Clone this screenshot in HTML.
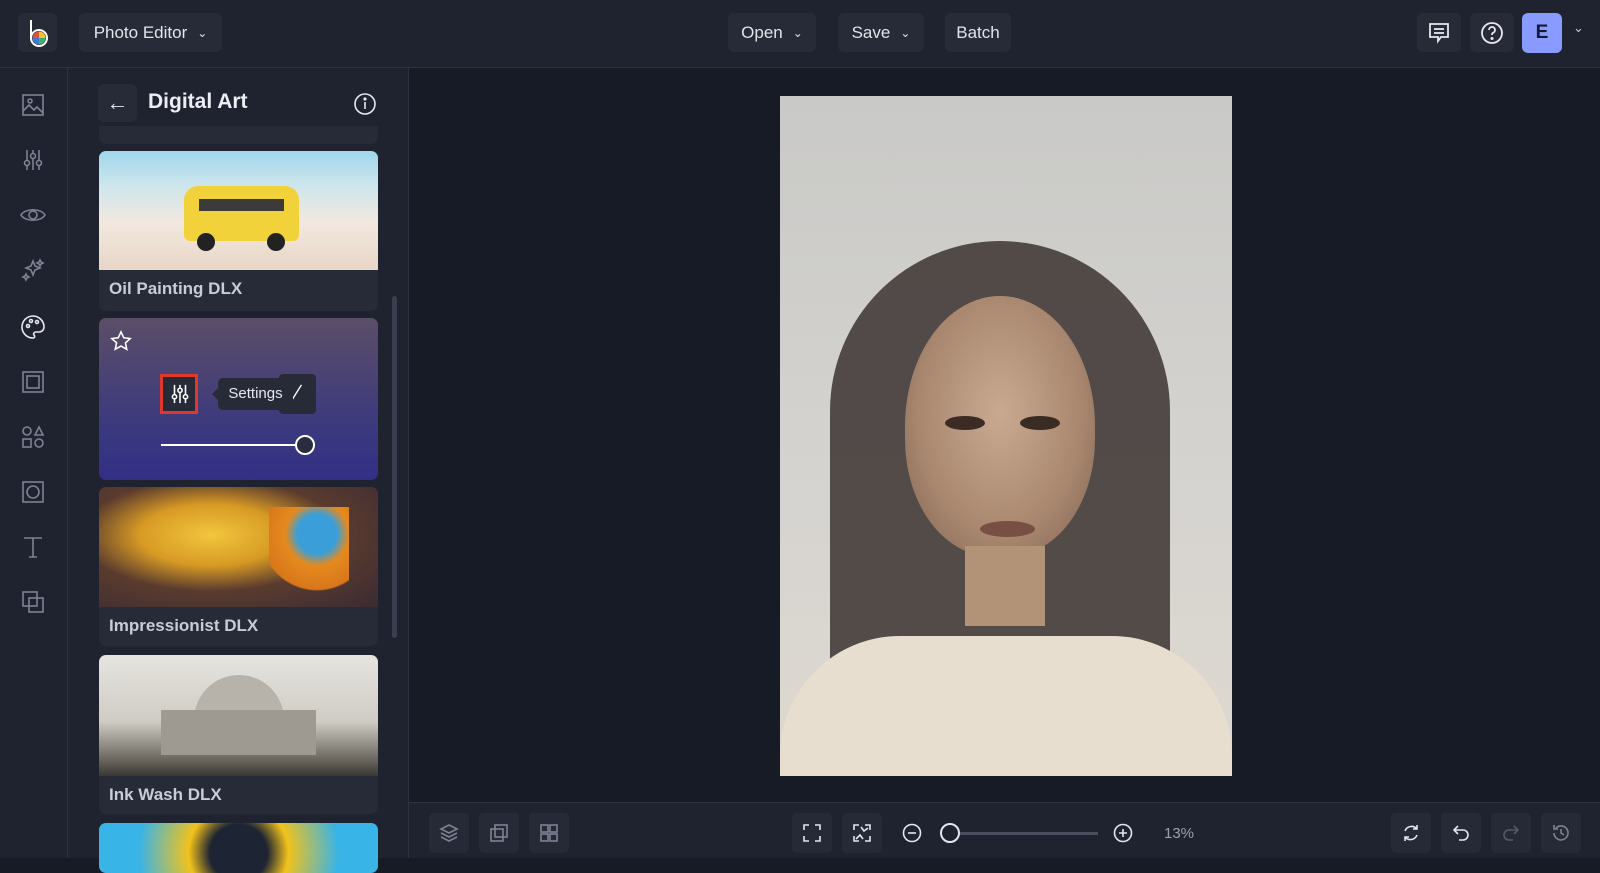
<!DOCTYPE html>
<html><head><meta charset="utf-8"><style>
*{box-sizing:border-box;margin:0;padding:0}
body{width:1600px;height:858px;overflow:hidden;background:#171b26;font-family:"Liberation Sans",sans-serif;color:#e4e6ee;position:relative}
.abs{position:absolute}
.top{left:0;top:0;width:1600px;height:68px;background:#1f2330;border-bottom:1px solid #2c3140}
.btn{position:absolute;background:#272b38;border-radius:6px;color:#e2e4ea;font-size:17px;display:flex;align-items:center;justify-content:center;gap:10px}
.rail{left:0;top:68px;width:68px;height:790px;background:#1f2330;border-right:1px solid #2c3140}
.panel{left:68px;top:68px;width:341px;height:790px;background:#1f2330;border-right:1px solid #2c3140}
.card{position:absolute;left:99px;width:279px;background:#272b38;border-radius:7px;overflow:hidden}
.lbl{position:absolute;left:10px;font-size:17px;font-weight:bold;color:#c9ccd6}
.ic{position:absolute;stroke:#7d8294;fill:none;stroke-width:1.6}
.bb{left:409px;top:802px;width:1191px;height:56px;background:#1f2330;border-top:1px solid #2c3140}
.sq{position:absolute;top:813px;width:40px;height:40px;background:#262a37;border-radius:5px}
</style></head><body>
<div class="abs top"></div>
<div class="btn" style="left:18px;top:13px;width:39px;height:39px"><svg width="26" height="30" viewBox="0 0 26 30"><line x1="6" y1="2" x2="6" y2="20" stroke="#fff" stroke-width="2"/><circle cx="14" cy="20" r="8" fill="none" stroke="#fff" stroke-width="2"/><circle cx="14" cy="20" r="6.5" fill="#e0513a"/><path d="M14 20 L14 13.5 A6.5 6.5 0 0 1 20.5 20Z" fill="#f4c430"/><path d="M14 20 L20.5 20 A6.5 6.5 0 0 1 14 26.5Z" fill="#3fb26a"/><path d="M14 20 L14 26.5 A6.5 6.5 0 0 1 7.5 20Z" fill="#3a7bd5"/></svg></div>
<div class="btn" style="left:79px;top:13px;width:143px;height:39px">Photo Editor <span style="font-size:12px">&#8964;</span></div>
<div class="btn" style="left:728px;top:13px;width:88px;height:39px">Open <span style="font-size:12px">&#8964;</span></div>
<div class="btn" style="left:838px;top:13px;width:86px;height:39px">Save <span style="font-size:12px">&#8964;</span></div>
<div class="btn" style="left:945px;top:13px;width:66px;height:39px">Batch</div>
<div class="btn" style="left:1417px;top:13px;width:44px;height:39px"><svg width="24" height="24" viewBox="0 0 24 24" fill="none" stroke="#e8e8ee" stroke-width="1.8"><path d="M3 3h18v13h-7l-3 4v-4H3z"/><line x1="7" y1="8" x2="17" y2="8"/><line x1="7" y1="12" x2="17" y2="12"/></svg></div>
<div class="btn" style="left:1470px;top:13px;width:44px;height:39px"><svg width="26" height="26" viewBox="0 0 26 26" fill="none" stroke="#e8e8ee" stroke-width="1.8"><circle cx="13" cy="13" r="10"/><path d="M10 10a3 3 0 1 1 4 2.8c-1 .4-1 1.2-1 2.2"/><circle cx="13" cy="18.5" r=".6" fill="#e8e8ee"/></svg></div>
<div class="btn" style="left:1522px;top:13px;width:40px;height:40px;background:#8a9bff;color:#141830;font-weight:bold;font-size:19px">E</div>
<div class="abs" style="left:1573px;top:20px;font-size:13px;color:#ccc">&#8964;</div>

<div class="abs rail"></div>
<svg class="ic" style="left:21px;top:93px" width="24" height="24" viewBox="0 0 24 24"><rect x="2" y="2" width="20" height="20"/><circle cx="9" cy="8" r="2"/><path d="M2 18l6-6 5 5 3-3 6 6"/></svg>
<svg class="ic" style="left:21px;top:148px" width="24" height="24" viewBox="0 0 24 24"><path d="M6 2v20M12 2v20M18 2v20"/><circle cx="6" cy="15" r="2.5" fill="#1f2330"/><circle cx="12" cy="8" r="2.5" fill="#1f2330"/><circle cx="18" cy="15" r="2.5" fill="#1f2330"/></svg>
<svg class="ic" style="left:20px;top:203px" width="26" height="24" viewBox="0 0 26 24"><path d="M1 12c4-7 20-7 24 0-4 7-20 7-24 0z"/><circle cx="13" cy="12" r="4"/></svg>
<svg class="ic" style="left:21px;top:258px" width="24" height="24" viewBox="0 0 24 24"><path d="M12 3l2 5 5 2-5 2-2 5-2-5-5-2 5-2z"/><path d="M5 16l1 2 2 1-2 1-1 2-1-2-2-1 2-1zM19 2l1 2 2 1-2 1-1 2-1-2-2-1 2-1z"/></svg>
<svg class="ic" style="left:20px;top:314px;stroke:#e8e8ee" width="26" height="26" viewBox="0 0 26 26"><path d="M13 2a11 11 0 1 0 0 22c2 0 2-2 1-3s0-3 2-3h3a5 5 0 0 0 5-5C24 7 19 2 13 2z"/><circle cx="8" cy="12" r="1.5"/><circle cx="11" cy="7" r="1.5"/><circle cx="17" cy="8" r="1.5"/></svg>
<svg class="ic" style="left:21px;top:370px" width="24" height="24" viewBox="0 0 24 24"><rect x="2" y="2" width="20" height="20"/><rect x="6" y="6" width="12" height="12"/></svg>
<svg class="ic" style="left:21px;top:425px" width="24" height="24" viewBox="0 0 24 24"><circle cx="6" cy="6" r="4"/><path d="M18 2l4 8h-8z"/><rect x="2" y="14" width="8" height="8"/><circle cx="18" cy="18" r="4"/></svg>
<svg class="ic" style="left:21px;top:480px" width="24" height="24" viewBox="0 0 24 24"><rect x="2" y="2" width="20" height="20"/><circle cx="12" cy="12" r="6"/></svg>
<svg class="ic" style="left:21px;top:535px" width="24" height="24" viewBox="0 0 24 24"><path d="M3 3h18M12 3v19M8 22h8"/></svg>
<svg class="ic" style="left:21px;top:590px" width="24" height="24" viewBox="0 0 24 24"><rect x="2" y="2" width="14" height="14"/><rect x="8" y="8" width="14" height="14"/></svg>

<div class="abs panel"></div>
<div class="card" style="top:126px;height:18px;border-radius:0 0 7px 7px"></div>
<div class="btn" style="left:98px;top:84px;width:39px;height:38px;font-size:22px">&#8592;</div>
<div class="abs" style="left:148px;top:90px;font-size:21px;font-weight:bold;color:#eceef3">Digital Art</div>
<svg class="abs" style="left:353px;top:92px" width="24" height="24" viewBox="0 0 24 24" fill="none" stroke="#e8e8ee" stroke-width="1.6"><circle cx="12" cy="12" r="10"/><line x1="12" y1="10" x2="12" y2="17"/><circle cx="12" cy="7" r=".8" fill="#e8e8ee"/></svg>
<div class="card" style="top:151px;height:160px"><div style="height:119px;background:linear-gradient(#9fd6ec 0%,#cfe6ec 30%,#f2e8df 60%,#e8d6c6 100%);position:relative"><div style="position:absolute;left:85px;top:35px;width:115px;height:55px;background:#f1d23a;border-radius:14px 14px 6px 6px"></div><div style="position:absolute;left:100px;top:48px;width:85px;height:12px;background:#3b3b3b"></div><div style="position:absolute;left:98px;top:82px;width:18px;height:18px;background:#222;border-radius:50%"></div><div style="position:absolute;left:168px;top:82px;width:18px;height:18px;background:#222;border-radius:50%"></div></div><div class="lbl" style="top:128px">Oil Painting DLX</div></div>
<div class="card" style="top:318px;height:162px;background:linear-gradient(#5b4e68,#3a387f 70%,#332f85)">
<svg class="abs" style="left:11px;top:12px" width="22" height="22" viewBox="0 0 24 24" fill="none" stroke="#fff" stroke-width="1.7"><path d="M12 2l3 6.5 7 .8-5.2 4.8 1.5 7L12 17.5 5.7 21l1.5-7L2 9.3l7-.8z"/></svg>
<div class="abs" style="left:61px;top:56px;width:38px;height:40px;border:3px solid #e0392b;background:#272b38"><svg style="position:absolute;left:6px;top:6px" width="22" height="22" viewBox="0 0 24 24" fill="none" stroke="#fff" stroke-width="1.7"><path d="M6 2v20M12 2v20M18 2v20"/><circle cx="6" cy="15" r="2.3" fill="#272b38"/><circle cx="12" cy="8" r="2.3" fill="#272b38"/><circle cx="18" cy="15" r="2.3" fill="#272b38"/></svg></div>
<div class="abs" style="left:180px;top:56px;width:37px;height:40px;background:#272b38;border-radius:4px;color:#fff;font-size:22px;text-align:center;line-height:38px">&#8725;</div>
<div class="abs" style="left:119px;top:60px;width:75px;height:32px;background:#272b38;border-radius:5px;color:#e8e8ee;font-size:15px;line-height:32px;text-align:center">Settings</div>
<div class="abs" style="left:113px;top:70px;width:0;height:0;border-top:6px solid transparent;border-bottom:6px solid transparent;border-right:6px solid #272b38"></div>
<div class="abs" style="left:62px;top:126px;width:145px;height:2px;background:#fff"></div>
<div class="abs" style="left:196px;top:117px;width:20px;height:20px;border:2.5px solid #fff;border-radius:50%;background:#2a2d40"></div>
</div>
<div class="card" style="top:487px;height:159px"><div style="height:120px;background:radial-gradient(ellipse at 40% 40%,#f2c63d 0%,#d79a24 30%,#5a3b2e 55%,#3b2b33 100%);position:relative"><div style="position:absolute;left:170px;top:20px;width:80px;height:90px;background:radial-gradient(circle at 60% 30%,#3a9fd8 0 25%,#e58a1e 40%,#d8761a 70%,transparent 72%)"></div></div><div class="lbl" style="top:129px">Impressionist DLX</div></div>
<div class="card" style="top:655px;height:159px"><div style="height:121px;background:linear-gradient(#e6e4df 0%,#cfccc4 55%,#6f6b63 85%,#3a3834);position:relative"><div style="position:absolute;left:95px;top:20px;width:90px;height:70px;background:#b7b3aa;border-radius:45px 45px 0 0"></div><div style="position:absolute;left:62px;top:55px;width:155px;height:45px;background:#9e9a91"></div></div><div class="lbl" style="top:130px">Ink Wash DLX</div></div>
<div class="card" style="top:823px;height:50px;background:radial-gradient(circle at 50% 60%,#1d2433 0 20%,#f2c21c 35%,#39b4e6 70%)"></div>
<div class="abs" style="left:392px;top:296px;width:5px;height:342px;background:#3a3f4f;border-radius:3px"></div>

<div class="abs" style="left:780px;top:96px;width:452px;height:680px;background:linear-gradient(#c9c9c7,#d6d4d0 60%,#ded8cf);overflow:hidden">
<div class="abs" style="left:50px;top:145px;width:340px;height:530px;background:#3b3330;border-radius:170px 170px 40px 40px;opacity:.85"></div>
<div class="abs" style="left:125px;top:200px;width:190px;height:260px;background:radial-gradient(ellipse at 50% 45%,#c9aa91,#a9876f 60%,#7c6150);border-radius:50% 50% 45% 45%"></div>
<div class="abs" style="left:165px;top:320px;width:40px;height:14px;background:#3a2c25;border-radius:50%"></div>
<div class="abs" style="left:240px;top:320px;width:40px;height:14px;background:#3a2c25;border-radius:50%"></div>
<div class="abs" style="left:200px;top:425px;width:55px;height:16px;background:#7a4f43;border-radius:50%"></div>
<div class="abs" style="left:185px;top:450px;width:80px;height:80px;background:#b29378"></div>
<div class="abs" style="left:0;top:540px;width:452px;height:140px;background:#e8ded0;border-radius:120px 120px 0 0"></div>
</div>

<div class="abs bb"></div>
<div class="sq" style="left:429px"></div><div class="sq" style="left:479px"></div><div class="sq" style="left:529px"></div>
<div class="sq" style="left:792px"></div><div class="sq" style="left:842px"></div>
<div class="sq" style="left:1391px"></div><div class="sq" style="left:1441px"></div><div class="sq" style="left:1491px"></div><div class="sq" style="left:1541px"></div>
<svg class="ic" style="left:439px;top:823px" width="20" height="20" viewBox="0 0 20 20"><path d="M10 2l8 4-8 4-8-4z"/><path d="M2 10l8 4 8-4M2 14l8 4 8-4"/></svg>
<svg class="ic" style="left:489px;top:823px" width="20" height="20" viewBox="0 0 20 20"><rect x="2" y="6" width="12" height="12"/><rect x="6" y="2" width="12" height="12"/></svg>
<svg class="ic" style="left:539px;top:823px" width="20" height="20" viewBox="0 0 20 20"><rect x="2" y="2" width="7" height="7"/><rect x="11" y="2" width="7" height="7"/><rect x="2" y="11" width="7" height="7"/><rect x="11" y="11" width="7" height="7"/></svg>
<svg class="ic" style="left:802px;top:823px;stroke:#e4e6ee" width="20" height="20" viewBox="0 0 20 20"><path d="M2 7V2h5M13 2h5v5M18 13v5h-5M7 18H2v-5"/></svg>
<svg class="ic" style="left:852px;top:823px;stroke:#e4e6ee" width="20" height="20" viewBox="0 0 20 20"><path d="M2 7V2h5M13 2h5v5M18 13v5h-5M7 18H2v-5M9 4l3 4 4-3M4 16l4-4 3 4"/></svg>
<svg class="ic" style="left:902px;top:823px;stroke:#e4e6ee" width="20" height="20" viewBox="0 0 20 20"><circle cx="10" cy="10" r="8.5"/><line x1="6" y1="10" x2="14" y2="10"/></svg>
<div class="abs" style="left:950px;top:832px;width:148px;height:3px;background:#4a4f60"></div>
<div class="abs" style="left:940px;top:823px;width:20px;height:20px;border:2.5px solid #e4e6ee;border-radius:50%;background:#1f2330"></div>
<svg class="ic" style="left:1113px;top:823px;stroke:#e4e6ee" width="20" height="20" viewBox="0 0 20 20"><circle cx="10" cy="10" r="8.5"/><path d="M6 10h8M10 6v8"/></svg>
<div class="abs" style="left:1164px;top:825px;font-size:15px;color:#9aa0b0">13%</div>
<svg class="ic" style="left:1401px;top:823px;stroke:#e4e6ee" width="20" height="20" viewBox="0 0 20 20"><path d="M16 6A7 7 0 0 0 4 8M4 14a7 7 0 0 0 12-2M16 2v4h-4M4 18v-4h4"/></svg>
<svg class="ic" style="left:1451px;top:823px;stroke:#e4e6ee" width="20" height="20" viewBox="0 0 20 20"><path d="M7 3L3 7l4 4M3 7h9a5 5 0 0 1 0 10H8"/></svg>
<svg class="ic" style="left:1501px;top:823px;stroke:#555a68" width="20" height="20" viewBox="0 0 20 20"><path d="M13 3l4 4-4 4M17 7H8a5 5 0 0 0 0 10h4"/></svg>
<svg class="ic" style="left:1551px;top:823px" width="20" height="20" viewBox="0 0 20 20"><path d="M3 10a7 7 0 1 0 2-5M3 2v4h4M10 6v4l3 2"/></svg>
</body></html>
